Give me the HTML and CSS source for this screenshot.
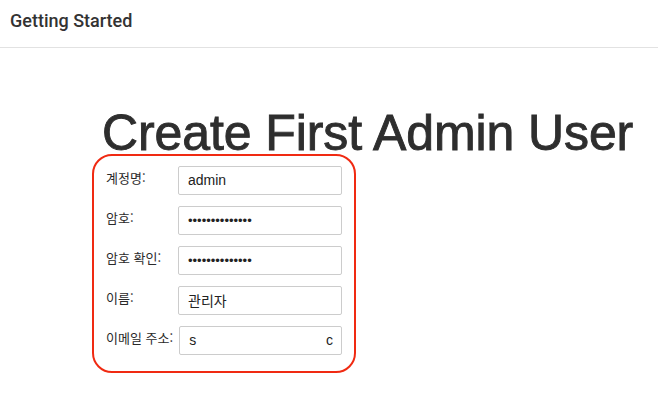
FILE: index.html
```html
<!DOCTYPE html>
<html lang="ko">
<head>
    <meta charset="UTF-8">
    <meta name="viewport" content="width=device-width, initial-scale=1.0">
    <title>Getting Started</title>
    <link rel="stylesheet" href="styles.css">
</head>
<body>
    <!-- Top bar -->
    <header class="top-bar">
        <h1>Getting Started</h1>
    </header>

    <main class="setup">
        <h2>Create First Admin User</h2>

        <!-- Admin account form -->
        <form class="admin-form">
            <div class="form-row">
                <label for="username">계정명:</label>
                <input type="text" id="username" value="admin">
            </div>
            <div class="form-row">
                <label for="password1">암호:</label>
                <input type="password" id="password1" value="administrator1">
            </div>
            <div class="form-row">
                <label for="password2">암호 확인:</label>
                <input type="password" id="password2" value="administrator1">
            </div>
            <div class="form-row">
                <label for="fullname">이름:</label>
                <input type="text" id="fullname" value="관리자">
            </div>
            <div class="form-row">
                <label for="email">이메일 주소:</label>
                <div class="field email-field" id="email"><span>s</span><span class="masked"></span><span>c</span></div>
            </div>
        </form>
    </main>
</body>
</html>
```

FILE: styles.css
```css
/* Basic styling */
* { box-sizing: border-box; margin: 0; padding: 0; }
body { background-color: #ffffff; color: #333333; font-family: "Liberation Sans", Arial, "Noto Sans CJK KR", sans-serif; }

/* Top bar */
.top-bar { height: 48px; padding: 0 10px; display: flex; align-items: center; border-bottom: 1px solid #e2e2e2; }
.top-bar h1 { font-family: Roboto, "Noto Sans", sans-serif; font-size: 18px; font-weight: 500; color: #333333; padding-bottom: 6px; }

/* Main setup section */
.setup { padding: 62px 0 0 102px; }
.setup h2 { font-size: 50px; font-weight: normal; color: #2e2e2e; line-height: 46px; letter-spacing: -0.1px; margin-bottom: -2px; -webkit-text-stroke: 0.9px #2e2e2e; }

/* Form box */
.admin-form { width: 264px; margin-left: -10px; padding: 10px 12px 16px 12px; border: 2px solid #f02a12; border-radius: 20px; display: flex; flex-direction: column; gap: 11px; }
.form-row { display: flex; align-items: center; }
.form-row label { width: 74px; font-size: 13px; color: #2a2a2a; font-family: "Noto Sans CJK KR", "Liberation Sans", sans-serif; padding-bottom: 7px; }
.form-row input, .field { width: 164px; height: 29px; padding: 0 9px 1px; border: 1px solid #cccccc; border-radius: 2px; font-size: 14px; color: #222222; font-family: "Liberation Sans", "Noto Sans CJK KR", sans-serif; background-color: #ffffff; }
.form-row input[type="password"] { font-size: 13px; letter-spacing: 0; }

/* Email value with the middle part blanked out */
.email-field { display: flex; align-items: center; overflow: hidden; padding-right: 8px; }
.email-field .masked { flex: 1; }
```
